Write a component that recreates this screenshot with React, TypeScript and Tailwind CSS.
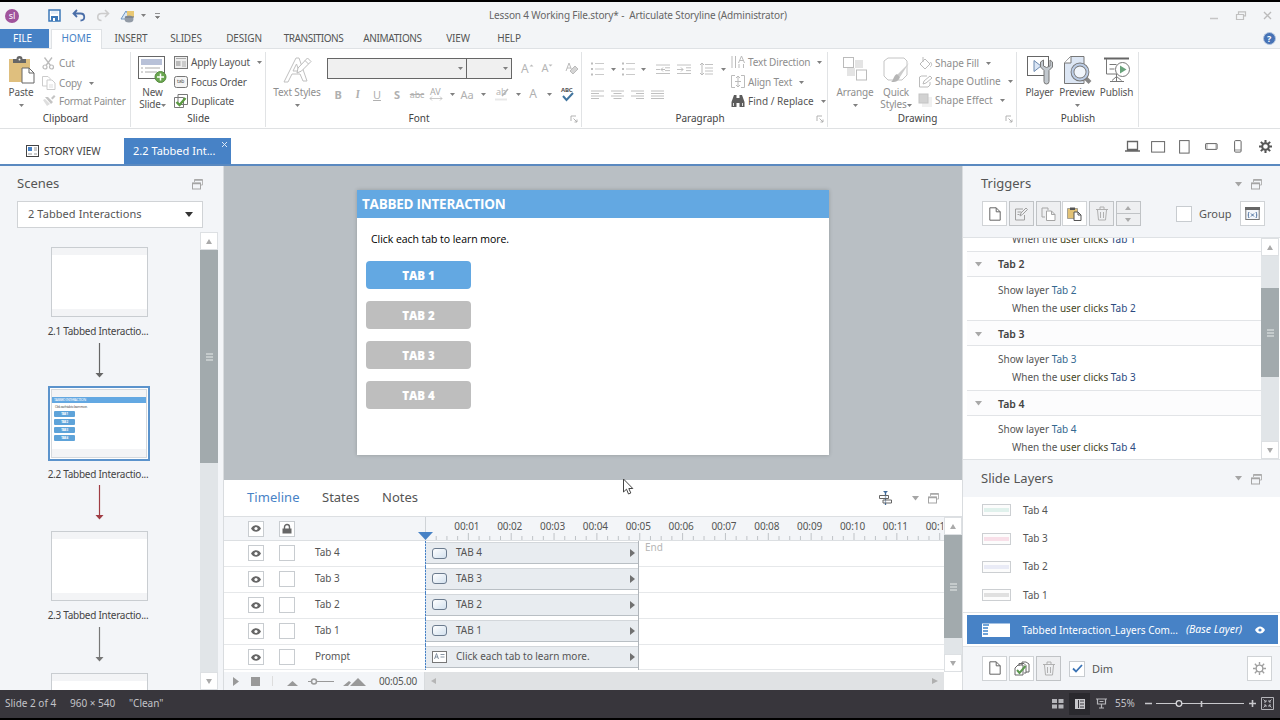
import type { ReactNode } from "react"
import clsx from "clsx"

const tabs = [
    { name: "INSERT", width: "w-[56px]" },
    { name: "SLIDES", width: "w-[54px]" },
    { name: "DESIGN", width: "w-[62px]" },
    { name: "TRANSITIONS", width: "w-[77px]" },
    { name: "ANIMATIONS", width: "w-[81px]" },
    { name: "VIEW", width: "w-[50px]" },
    { name: "HELP", width: "w-[52px]" },
]

const timelineRows = [
    { name: "Tab 4", label: "TAB 4", kind: "shape" },
    { name: "Tab 3", label: "TAB 3", kind: "shape" },
    { name: "Tab 2", label: "TAB 2", kind: "shape" },
    { name: "Tab 1", label: "TAB 1", kind: "shape" },
    { name: "Prompt", label: "Click each tab to learn more.", kind: "text" },
]

const layers = [
    { name: "Tab 4", band: "bg-[#e0f1ec]" },
    { name: "Tab 3", band: "bg-[#f8dfe8]" },
    { name: "Tab 2", band: "bg-[#e9ebf6]" },
    { name: "Tab 1", band: "bg-[#e0e0e0]" },
]

// one second on the timeline ruler, in px
const SECOND = 42.85

function Svg({ w, h, className, children }: { w: number; h: number; className?: string; children: ReactNode }) {
    return (
        <svg width={w} height={h} viewBox={`0 0 ${w} ${h}`} fill="none" className={clsx("shrink-0 overflow-visible", className)}>
            {children}
        </svg>
    )
}

function Caret({ className }: { className?: string }) {
    return (
        <Svg w={5} h={3} className={className}>
            <path d="M0 0h5L2.5 3z" fill="#808080" />
        </Svg>
    )
}

/* ---------- ribbon ---------- */

function Group({ name, width, launcher, children }: { name: string; width: string; launcher?: boolean; children: ReactNode }) {
    return (
        <div className={clsx("relative flex shrink-0 flex-col", width)}>
            <div className="flex h-[61px]">{children}</div>
            <div className={clsx("flex h-[15px] items-center justify-center tracking-normal text-[#444]", launcher && "pr-[10px]")}>{name}</div>
            {launcher && (
                <Svg w={8} h={8} className="absolute bottom-[5px] right-[4px]">
                    <path d="M1 6V1h5M3.5 3.5L7 7M7 4.500V7H4.500" stroke="#aaa" strokeWidth=".9" />
                </Svg>
            )}
            <div className="absolute right-0 top-[2px] h-[75px] w-px bg-[#e1e3e5]" />
        </div>
    )
}

function SmallRow({ icon, text, caret, dim, className }: { icon: ReactNode; text: string; caret?: boolean; dim?: boolean; className?: string }) {
    return (
        <div className={clsx("flex items-center whitespace-nowrap", dim ? "text-[#8e8e8e]" : "text-[#555]", className)}>
            <span className="flex w-[17px] shrink-0">{icon}</span>
            {text}
            {caret && <Caret className="ml-[7px]" />}
        </div>
    )
}

function BigButton({ icon, lines, caret, dim, width }: { icon: ReactNode; lines: string[]; caret?: "below" | "inline"; dim?: boolean; width: string }) {
    return (
        <div className={clsx("flex shrink-0 flex-col items-center pt-[6px]", dim ? "text-[#8e8e8e]" : "text-[#555]", width)}>
            <div className="flex h-[30px] items-start">{icon}</div>
            {lines.map((l, i) => (
                <div key={l} className="flex h-[12px] items-center whitespace-nowrap leading-none">
                    {l}
                    {caret === "inline" && i === lines.length - 1 && <Caret className="mt-[3px]" />}
                </div>
            ))}
            {caret === "below" && <Caret className="mt-[6px]" />}
        </div>
    )
}

function Cell({ w, children }: { w: string; children: ReactNode }) {
    return <span className={clsx("flex shrink-0 items-center justify-center", w)}>{children}</span>
}

function Lines({ kind }: { kind: "left" | "center" | "right" | "full" }) {
    const short = { left: "M0 3.500h8M0 8.500h8", center: "M2.500 3.500h8M2.500 8.500h8", right: "M5 3.500h8M5 8.500h8", full: "M0 3.500h13M0 8.500h13" }[kind]
    return (
        <Svg w={13} h={11}>
            <path d={`M0 1h13M0 6h13${short}`} stroke="#c0c0c0" strokeWidth="1" />
        </Svg>
    )
}

function ListIcon() {
    return (
        <Svg w={13} h={14}>
            <path d="M4 1.500h9M4 7h9M4 12.500h9" stroke="#cacaca" />
            <path d="M0 1.500h2M0 7h2M0 12.500h2" stroke="#bdbdbd" strokeWidth="2" />
        </Svg>
    )
}

function Ribbon() {
    return (
        <div className="flex h-[80px] shrink-0 border-b border-[#dfe1e3] bg-white pt-px tracking-[-0.15px]">
            <Group name="Clipboard" width="w-[131px]">
                <BigButton
                    width="w-[42px]"
                    caret="below"
                    lines={["Paste"]}
                    icon={
                        <Svg w={27} h={29}>
                            <rect x="1" y="3" width="21" height="23" fill="#dfbf7e" />
                            <path d="M5 3h3.500a3 3 0 0 1 6 0H18v4H5z" fill="#666" />
                            <circle cx="11.500" cy="3.500" r="1" fill="#fff" />
                            <path d="M14 12h7l5 5v10H14z" fill="#fff" stroke="#666" />
                            <path d="M21 12v5h5" stroke="#666" />
                        </Svg>
                    }
                />
                <div className="flex flex-col">
                    <SmallRow
                        dim
                        className="mt-[4px] h-[18px]"
                        text="Cut"
                        icon={
                            <Svg w={13} h={13}>
                                <path d="M2.500 0.500l6 8M10 0.500l-6 8" stroke="#bbb" strokeWidth="1.300" />
                                <circle cx="3" cy="10" r="2" stroke="#bbb" strokeWidth="1.200" />
                                <circle cx="9.500" cy="10" r="2" stroke="#bbb" strokeWidth="1.200" />
                            </Svg>
                        }
                    />
                    <SmallRow
                        dim
                        caret
                        className="mt-[2px] h-[18px]"
                        text="Copy"
                        icon={
                            <Svg w={14} h={14}>
                                <path d="M.5.500H6l2 2V10H.5z" fill="#fff" stroke="#ccc" />
                                <path d="M5 4h5l3 3v6.500H5z" fill="#fff" stroke="#ccc" />
                                <path d="M7 9h4M7 11h4" stroke="#ddd" />
                            </Svg>
                        }
                    />
                    <SmallRow
                        dim
                        className="h-[18px] tracking-[-0.270px]"
                        text="Format Painter"
                        icon={
                            <Svg w={14} h={12}>
                                <path d="M3 2l6 7 2-2-5-5z M9 3l3-3 1.500 1.500-3 3z" fill="#c4c4c4" />
                                <path d="M1 5l4 6 3-2-5-5z" fill="#dedede" />
                            </Svg>
                        }
                    />
                </div>
            </Group>

            <Group name="Slide" width="w-[135px]">
                <BigButton
                    width="w-[43px]"
                    caret="inline"
                    lines={["New", "Slide"]}
                    icon={
                        <Svg w={29} h={29}>
                            <rect x=".5" y=".5" width="26" height="22" fill="#fff" stroke="#666" />
                            <rect x="3" y="3" width="21" height="6" fill="#b8c1d8" />
                            <path d="M3 12h2M7 12h15M3 16h2M7 16h12" stroke="#aaa" />
                            <circle cx="22.500" cy="21" r="5.500" fill="#6aa650" stroke="#578c40" />
                            <path d="M22.500 17.500v7M19 21h7" stroke="#fff" strokeWidth="1.500" />
                        </Svg>
                    }
                />
                <div className="flex flex-col">
                    <SmallRow
                        caret
                        className="mt-[3px] h-[18px]"
                        text="Apply Layout"
                        icon={
                            <Svg w={15} h={13}>
                                <rect x=".5" y=".5" width="13" height="12" fill="#eee" stroke="#777" />
                                <path d="M2 2.500h10M8 6h4M8 8h4M8 10h4" stroke="#aaa" />
                                <path d="M2 5h4.500v5H2z" fill="#bbb" />
                            </Svg>
                        }
                    />
                    <SmallRow
                        className="mt-[2px] h-[18px]"
                        text="Focus Order"
                        icon={
                            <Svg w={15} h={12}>
                                <rect x=".5" y=".5" width="13" height="11" rx="2" fill="#f4f4f4" stroke="#777" />
                                <text x="3" y="7" fontSize="5" fill="#555">tab</text>
                            </Svg>
                        }
                    />
                    <SmallRow
                        className="mt-[1px] h-[18px]"
                        text="Duplicate"
                        icon={
                            <Svg w={15} h={14}>
                                <path d="M4 .5h9.500v10H4zM.5 3.500h9v10H.5z" fill="#fff" stroke="#777" />
                                <path d="M2.500 8l3 3 6-7" stroke="#5b9a42" strokeWidth="2.400" />
                            </Svg>
                        }
                    />
                </div>
            </Group>

            <Group name="Font" width="w-[316px]" launcher>
                <BigButton
                    width="w-[62px]"
                    dim
                    caret="below"
                    lines={["Text Styles"]}
                    icon={
                        <Svg w={29} h={29}>
                            <path d="M1 26L13 2l3 0 8 23h-4l-3-7H9l-4 8zM10 15h6l-2.500-7z" stroke="#c0c0c0" />
                            <path d="M14 17l1-5L24.500 2l3.500 3.500L18.500 15z" fill="#fff" stroke="#bbb" />
                            <path d="M22 4.500l3.500 3.500" stroke="#bbb" />
                        </Svg>
                    }
                />
                <div className="flex flex-col">
                    <div className="mt-[8px] flex h-[21px] items-center">
                        <div className="ml-[-1px] flex h-[21px] w-[140px] items-center justify-end border border-[#666] bg-[#f0f0f0] pr-[3px]">
                            <Caret />
                        </div>
                        <div className="ml-[-1px] flex h-[21px] w-[46px] items-center justify-end border border-[#666] bg-[#f0f0f0] pr-[3px]">
                            <Caret />
                        </div>
                        <span className="ml-[9px] text-[12px] text-[#b5b5b5]">A</span>
                        <Svg w={5} h={12}><path d="M.5 3.500L2.500 1.500l2 2z" fill="#bbb" /></Svg>
                        <span className="ml-[8px] text-[11px] text-[#b5b5b5]">A</span>
                        <Svg w={5} h={12}><path d="M.5 1.500l2 2 2-2z" fill="#bbb" /></Svg>
                        <Svg w={14} h={14} className="ml-[12px]">
                            <path d="M1 9l3-8 3 8M2 6h4" stroke="#bbb" />
                            <path d="M5 9l5-5 3 3-5 5z" fill="#d5d5d5" stroke="#bbb" />
                        </Svg>
                    </div>
                    <div className="mt-[6px] flex h-[18px] items-center text-[11px] leading-none text-[#b0b0b0]">
                        <Cell w="w-5"><b>B</b></Cell>
                        <Cell w="w-[19px]"><i className="font-serif font-bold">I</i></Cell>
                        <Cell w="w-5"><u>U</u></Cell>
                        <Cell w="w-5"><span className="font-bold">S</span></Cell>
                        <Cell w="w-5"><s className="text-[9px]">abc</s></Cell>
                        <Cell w="w-[18px]">
                            <Svg w={14} h={14}>
                                <text x="1" y="8" fontSize="9" fill="#aaa">AV</text>
                                <path d="M1 11.500h12M3 9.500l-2 2 2 2M11 9.500l2 2-2 2" stroke="#bbb" strokeWidth=".8" />
                            </Svg>
                        </Cell>
                        <Cell w="w-[14px]"><Caret /></Cell>
                        <Cell w="w-4">Aa</Cell>
                        <Cell w="w-4"><Caret /></Cell>
                        <Cell w="w-[22px]">
                            <Svg w={15} h={14}>
                                <text x="1" y="8" fontSize="9" fill="#b5b5b5">ab</text>
                                <path d="M7 9l6-7" stroke="#b5b5b5" strokeWidth="1.500" />
                                <path d="M0 12.500h12" stroke="#e8e8e8" strokeWidth="2" />
                            </Svg>
                        </Cell>
                        <Cell w="w-[10px]"><Caret /></Cell>
                        <Cell w="w-5"><span className="text-[12px]">A</span></Cell>
                        <Cell w="w-3"><Caret /></Cell>
                        <Cell w="w-[26px]">
                            <Svg w={14} h={16}>
                                <text x="0" y="5.800" fontSize="6" fontWeight="700" fill="#555">ABC</text>
                                <path d="M2 10l3.500 4L12 7" stroke="#41759f" strokeWidth="2" />
                            </Svg>
                        </Cell>
                    </div>
                </div>
            </Group>

            <Group name="Paragraph" width="w-[246px]" launcher>
                <div className="flex w-[149px] shrink-0 flex-col pl-[9px]">
                    <div className="mt-[11px] flex h-4 items-center">
                        <ListIcon />
                        <Caret className="ml-[7px] mr-[6px]" />
                        <ListIcon />
                        <Caret className="ml-[6px]" />
                        <Svg w={14} h={11} className="ml-[10px]">
                            <path d="M0 1h14M0 9.500h14M0 5.500h4M9 3.800h5M9 6.600h5" stroke="#c2c2c2" />
                            <path d="M5 5.500h4M7 3.500l-2 2 2 2" stroke="#bbb" />
                        </Svg>
                        <Svg w={14} h={11} className="ml-[7px]">
                            <path d="M0 1h14M0 9.500h14M0 5.500h6M9 3.800h5M9 6.600h5" stroke="#c2c2c2" />
                            <path d="M4 3.500l2 2-2 2" stroke="#bbb" />
                        </Svg>
                        <Svg w={13} h={14} className="ml-[9px]">
                            <path d="M5 2.500h8M5 6h8M5 9h8M5 12h8" stroke="#c2c2c2" />
                            <path d="M2 1v12M0 3l2-2 2 2M0 11l2 2 2-2" stroke="#bbb" />
                        </Svg>
                        <Caret className="ml-[8px]" />
                    </div>
                    <div className="mt-[10px] flex h-4 items-center gap-[7px]">
                        <Lines kind="left" />
                        <Lines kind="center" />
                        <Lines kind="right" />
                        <Lines kind="full" />
                    </div>
                </div>
                <div className="flex flex-col">
                    <SmallRow
                        dim
                        caret
                        className="mt-[3px] h-[18px]"
                        text="Text Direction"
                        icon={
                            <Svg w={14} h={14}>
                                <path d="M1 1v12M4.500 1v12M8 9v4M12.500 9v4" stroke="#bbb" />
                                <path d="M7.500 8l3-7 3 7M8.500 5.500h4" stroke="#bbb" />
                            </Svg>
                        }
                    />
                    <SmallRow
                        dim
                        caret
                        className="mt-[2px] h-[18px]"
                        text="Align Text"
                        icon={
                            <Svg w={14} h={14}>
                                <path d="M4 .5H.5v12H4M10 .5h3.500v12H10" stroke="#bbb" />
                                <path d="M4 6.500h6M7 1v11M5 3l2-2 2 2M5 10l2 2 2-2" stroke="#bbb" />
                            </Svg>
                        }
                    />
                    <SmallRow
                        caret
                        className="mt-[1px] h-[18px] tracking-normal"
                        text="Find / Replace"
                        icon={
                            <Svg w={14} h={12}>
                                <path d="M3 0h2.500v3h3V0H11l2.500 7v5H8.500V8h-3v4H.5V7z" fill="#5c5c5c" />
                                <path d="M2.500 8v3M11.500 8v3" stroke="#ddd" />
                            </Svg>
                        }
                    />
                </div>
            </Group>

            <Group name="Drawing" width="w-[189px]" launcher>
                <BigButton
                    width="w-[54px]"
                    dim
                    caret="below"
                    lines={["Arrange"]}
                    icon={
                        <Svg w={26} h={26}>
                            <rect x="13" y="4" width="8" height="8" fill="#e4e4e4" />
                            <rect x="5" y="12" width="8" height="8" fill="#e4e4e4" />
                            <rect x="1.500" y="1.500" width="10" height="10" fill="#fff" stroke="#bbb" />
                            <rect x="14.500" y="14" width="10" height="10" fill="#fff" stroke="#bbb" />
                        </Svg>
                    }
                />
                <BigButton
                    width="w-[28px]"
                    dim
                    caret="inline"
                    lines={["Quick", "Styles"]}
                    icon={
                        <Svg w={28} h={28}>
                            <path d="M6 2h16l3 3v14l-5 5H6l-4-4V5z" fill="#fff" stroke="#c4c4c4" />
                            <path d="M27 7l-9 14-3-2z" fill="#ccc" />
                            <path d="M15 18l3 3c-2 5-5 5-9 5 3-2 2-6 6-8z" fill="#b5b5b5" />
                        </Svg>
                    }
                />
                <div className="ml-[8px] flex flex-col tracking-[-0.05px]">
                    <SmallRow
                        dim
                        caret
                        className="mt-[4px] h-[18px]"
                        text="Shape Fill"
                        icon={
                            <Svg w={15} h={13}>
                                <path d="M2 7l5-5 5 5-5 5zM5 0v5" stroke="#bbb" />
                                <path d="M12.500 5c2 3 1 4-.5 5" stroke="#bbb" />
                            </Svg>
                        }
                    />
                    <SmallRow
                        dim
                        caret
                        className="h-[18px]"
                        text="Shape Outline"
                        icon={
                            <Svg w={15} h={13}>
                                <path d="M12 7v3l-2 2H1.500V2l2-1H9" stroke="#bbb" />
                                <path d="M5 9l1-3 6-5 2 2-6 5z" fill="#fff" stroke="#bbb" />
                            </Svg>
                        }
                    />
                    <SmallRow
                        dim
                        caret
                        className="mt-[1px] h-[18px]"
                        text="Shape Effect"
                        icon={
                            <Svg w={15} h={14}>
                                <rect x="4" y="4" width="10" height="10" fill="#f0f0f0" />
                                <rect x="1" y="1" width="9" height="9" fill="#d2d2d2" stroke="#c4c4c4" />
                            </Svg>
                        }
                    />
                </div>
            </Group>

            <Group name="Publish" width="w-[122px]">
                <div className="w-[4px]" />
                <BigButton
                    width="w-[37px]"
                    lines={["Player"]}
                    icon={
                        <Svg w={28} h={29}>
                            <rect x="1.500" y=".5" width="21" height="19" fill="#fff" stroke="#666" />
                            <path d="M8 4.500l7 5.500-7 5.500z" fill="#dbe6f5" stroke="#6a88ad" />
                            <path d="M14.500 6v5l3.500 3.500v11a2.500 2.500 0 0 0 5 0v-11l3.500-3.500V6L24 4v6l-3.500 1.500L17.500 10V4z" fill="#c2c8ce" stroke="#777" />
                        </Svg>
                    }
                />
                <BigButton
                    width="w-[38px]"
                    caret="below"
                    lines={["Preview"]}
                    icon={
                        <Svg w={29} h={29}>
                            <path d="M1.500 7l6-6.500H21v27H1.500z" fill="#dce6f4" stroke="#777" />
                            <path d="M1.500 7H8V.5" fill="#fff" stroke="#777" />
                            <path d="M21.500 21l5.500 5.500" stroke="#888" strokeWidth="4" />
                            <circle cx="17" cy="16" r="7.500" fill="#f1f6fc" stroke="#777" strokeWidth="3.800" />
                            <circle cx="17" cy="16" r="7.500" stroke="#bccde6" strokeWidth="2" />
                        </Svg>
                    }
                />
                <BigButton
                    width="w-[41px]"
                    lines={["Publish"]}
                    icon={
                        <Svg w={26} h={29}>
                            <path d="M0 2.500h25" stroke="#666" strokeWidth="2" />
                            <path d="M2.500 3v15H13M12.500 18v7M6 25.500h14M8 24.500l4.500-4 5 4M5.500 8.500h7M5.500 13h5" stroke="#777" />
                            <circle cx="18.500" cy="13.500" r="7" fill="#fff" stroke="#777" />
                            <path d="M16 9.500l6.500 4-6.500 4z" fill="#6aa37c" />
                        </Svg>
                    }
                />
            </Group>
        </div>
    )
}

function TitleBar() {
    return (
        <div className="flex h-[27px] shrink-0 items-center bg-[#f3f5f7] text-[#666]">
            <div className="ml-[5px] flex h-[14px] w-[14px] items-center justify-center rounded-full bg-[#a0549c] text-[9px] leading-none text-white">sl</div>
            <Svg w={13} h={13} className="ml-[29px]">
                <path d="M1 1h11v11H1z" fill="#fff" stroke="#3c78b8" strokeWidth="1.500" />
                <path d="M3 7h7v5H3z" fill="#3c78b8" />
                <path d="M5 9h2v3H5z" fill="#fff" />
                <path d="M3 2h7v3H3z" fill="#e6eef8" />
            </Svg>
            <Svg w={14} h={13} className="ml-[11px]">
                <path d="M5 1L1.500 4.500 5 8M2 4.500h6.500c5 0 5 7 0 7" stroke="#4a6ea8" strokeWidth="1.800" />
            </Svg>
            <Svg w={14} h={13} className="ml-[10px]">
                <path d="M9 1l3.500 3.500L9 8M12 4.500H5.500c-5 0-5 7 0 7" stroke="#ccc" strokeWidth="1.600" />
            </Svg>
            <Svg w={16} h={14} className="ml-[10px]">
                <path d="M1 10l5-8 5 8z" fill="#d9e7f5" stroke="#6f97c3" />
                <rect x="7" y="2" width="7" height="6" fill="#e9c873" />
                <ellipse cx="9" cy="10" rx="4.500" ry="3.500" fill="#929ba6" />
                <path d="M5 8h9" stroke="#6b737d" />
            </Svg>
            <Caret className="ml-[5px]" />
            <Svg w={7} h={6} className="ml-[8px]"><path d="M1 .5h5M1.500 3.500h4L3.500 5.500z" stroke="#777" fill="#777" strokeWidth=".8" /></Svg>
            <div className="ml-[328px] w-[300px] whitespace-pre text-[10px] tracking-[-0.140px]">Lesson 4 Working File.story* -  Articulate Storyline (Administrator)</div>
            <div className="ml-auto mr-[8px] flex items-center">
                <Svg w={8} h={9} className="mr-[18px]"><path d="M0 7.500h8" stroke="#c5c5c5" strokeWidth="1.500" /></Svg>
                <Svg w={10} h={9} className="mr-[17px]"><path d="M2.500 3V.8h7v4H8M.5 3.500h7v5h-7z" stroke="#c0c0c0" strokeWidth="1.200" /></Svg>
                <Svg w={9} h={9}><path d="M1 1l7 7M8 1L1 8" stroke="#bbb" strokeWidth="1.400" /></Svg>
            </div>
        </div>
    )
}

function MenuTabs() {
    return (
        <div className="flex h-5 shrink-0 border-b border-[#dfe2e5] bg-[#f3f5f7] text-[10px] tracking-[-0.15px] text-[#555]">
            <div className="flex w-[49px] items-center justify-center bg-[#4782c6] pr-1 text-white">FILE</div>
            <div className="-mb-px ml-[2px] flex w-[51px] items-center justify-center border-x border-t border-[#dfe2e5] bg-white pb-[2px] tracking-normal text-[#4782c6]">HOME</div>
            <div className="flex pl-[1px]">
                {tabs.map((t) => (
                    <div
                        key={t.name}
                        className={clsx("flex items-center justify-center", t.width, t.name === "TRANSITIONS" && "tracking-[-0.45px]", t.name === "ANIMATIONS" && "tracking-[-0.35px]")}
                    >
                        {t.name}
                    </div>
                ))}
            </div>
            <Svg w={13} h={13} className="ml-auto mr-[4px] mt-[3px]">
                <circle cx="6.500" cy="6.500" r="6" fill="#4672b5" stroke="#b4c6e0" />
                <text x="4" y="10" fontSize="9" fontWeight="700" fill="#fff">?</text>
            </Svg>
        </div>
    )
}

function Gear({ bold, className }: { bold?: boolean; className?: string }) {
    return (
        <svg width={13} height={13} viewBox="0 0 14 14" fill="none" stroke="currentColor" strokeWidth={bold ? 2.2 : 1.5} className={className}>
            <circle cx="7" cy="7" r="3.600" />
            <path d="M7 0v3M7 11v3M0 7h3M11 7h3M2 2l2.200 2.200M9.800 9.800L12 12M12 2L9.800 4.200M4.200 9.800L2 12" />
        </svg>
    )
}

function DocumentTabs() {
    return (
        <div className="flex h-[37px] shrink-0 items-end border-b-2 border-[#5a89c0] bg-white">
            <div className="flex h-[26px] w-[124px] items-center pl-[26px] text-[10px] tracking-[-0.1px] text-[#444]">
                <Svg w={13} h={12} className="mr-[5px]">
                    <rect x=".5" y=".5" width="12" height="11" fill="#fff" stroke="#444" />
                    <rect x="2" y="2" width="4" height="4" fill="#4782c6" />
                    <path d="M8 3h3M8 5h3M2 9h4M8 9h3" stroke="#bbb" strokeWidth="1.500" />
                </Svg>
                STORY VIEW
            </div>
            <div className="relative flex h-[26px] w-[107px] items-center bg-[#4782c6] pl-[9px] text-[11px] text-white">
                2.2 Tabbed Int...
                <Svg w={7} h={7} className="absolute right-[3px] top-[3px]"><path d="M1 1l5 5M6 1L1 6" stroke="#dce8f6" /></Svg>
            </div>
            <div className="ml-auto mr-[8px] flex h-[35px] items-center text-[#666]">
                <Svg w={15} h={11} className="mr-[11px]"><path d="M2.500.5h10v8h-10zM0 10h15" stroke="currentColor" strokeWidth="1.300" /></Svg>
                <Svg w={15} h={12} className="mr-[13px]"><rect x=".6" y=".6" width="13" height="10.500" stroke="currentColor" /></Svg>
                <Svg w={11} h={14} className="mr-[15px]"><rect x=".6" y=".6" width="9.500" height="12.500" stroke="currentColor" /></Svg>
                <Svg w={13} h={7} className="mr-[16px]"><rect x=".6" y=".6" width="11.500" height="5.800" rx=".5" stroke="currentColor" /><path d="M2 1v5M11 1v5" stroke="currentColor" strokeWidth=".6" /></Svg>
                <Svg w={8} h={13} className="mr-[17px]"><rect x=".6" y=".6" width="6.500" height="11.500" rx="1" stroke="currentColor" /><path d="M1 10h6" stroke="currentColor" strokeWidth=".7" /></Svg>
                <Gear bold className="text-[#555]" />
            </div>
        </div>
    )
}

/* ---------- shared panel parts ---------- */

function Undock() {
    return (
        <Svg w={11} h={12}>
            <path d="M2.500 4V1.500h8V7H9" stroke="#b5b5b5" />
            <path d="M2.500 2h8M.5 5.500h8" stroke="#a5a5a5" strokeWidth="1.600" />
            <rect x=".5" y="5" width="8" height="6" stroke="#a5a5a5" />
        </Svg>
    )
}

function PanelHeader({ title, height }: { title: string; height: string }) {
    return (
        <div className={clsx("flex shrink-0 items-center pl-[18px] pr-[18px] text-[13px] text-[#555]", height)}>
            {title}
            <Svg w={7} h={5} className="ml-auto mr-[9px]"><path d="M0 0h7L3.500 4.500z" fill="#a5a5a5" /></Svg>
            <Undock />
        </div>
    )
}

function VScroll({ before, thumb }: { before?: string; thumb: string }) {
    return (
        <div className="flex w-[18px] shrink-0 flex-col bg-[#e1e5e8]">
            <div className="flex h-[18px] shrink-0 items-center justify-center border border-[#dde0e3] bg-white">
                <Svg w={6} h={5}><path d="M0 5l3-5 3 5z" fill="#aaa" /></Svg>
            </div>
            {before && <div className={before} />}
            <div className={clsx("flex items-center justify-center bg-[#a2aaad]", thumb)}>
                <Svg w={7} h={8}><path d="M0 1h7M0 4h7M0 7h7" stroke="#e8ebec" strokeWidth="1.200" /></Svg>
            </div>
            <div className="mt-auto flex h-[18px] shrink-0 items-center justify-center border border-[#dde0e3] bg-white">
                <Svg w={6} h={5}><path d="M0 0l3 5 3-5z" fill="#aaa" /></Svg>
            </div>
        </div>
    )
}

/* ---------- scenes ---------- */

function Thumb() {
    return (
        <div className="flex h-[70px] w-[97px] shrink-0 border border-[#c9cdd1] bg-[#f3f4f6] py-[7px]">
            <div className="w-full bg-white" />
        </div>
    )
}

function SelectedThumb() {
    return (
        <div className="h-[75px] w-[102px] shrink-0 border-2 border-[#5b93cc] bg-white p-px">
            <div className="flex h-full flex-col border border-[#d5d9dd] bg-white">
                <div className="h-[7px] shrink-0 bg-[#f3f4f6]" />
                <div className="flex h-[6px] shrink-0 items-center bg-[#63a8e2] pl-[2px] text-[3.500px] leading-none text-white">TABBED INTERACTION</div>
                <div className="mt-[2px] pl-[3px] text-[3px] leading-[4px] text-[#444]">Click each tab to learn more.</div>
                <div className="mt-[2px] flex flex-col gap-[2px] pl-[2px]">
                    {["TAB 1", "TAB 2", "TAB 3", "TAB 4"].map((t) => (
                        <div key={t} className="flex h-[6px] w-[21px] items-center justify-center rounded-[1px] bg-[#5ea3d9] text-[3px] font-bold leading-none text-white">{t}</div>
                    ))}
                </div>
                <div className="mt-auto h-[8px] bg-[#f3f4f6]" />
            </div>
        </div>
    )
}

function Connector({ className }: { className: string }) {
    return (
        <Svg w={9} h={35} className={className}>
            <path d="M4.500 0v31" stroke="currentColor" strokeWidth="1.200" />
            <path d="M.5 30h8l-4 4.500z" fill="currentColor" />
        </Svg>
    )
}

function Scenes() {
    return (
        <div className="flex w-[224px] shrink-0 flex-col border-r border-[#d9dcdf] bg-[#f3f5f8]">
            <div className="flex h-[35px] shrink-0 items-center justify-between pl-[17px] pr-[20px] text-[13px] text-[#555]">
                Scenes
                <Undock />
            </div>
            <div className="ml-[17px] flex h-[27px] w-[186px] shrink-0 items-center justify-between border border-[#d0d3d6] bg-white pl-[10px] pr-[9px] text-[11px] tracking-[0.08px] text-[#555]">
                2 Tabbed Interactions
                <Svg w={8} h={5}><path d="M0 0h8L4 5z" fill="#333" /></Svg>
            </div>
            <div className="mt-[4px] flex min-h-0 flex-1">
                <div className="flex w-[200px] flex-col items-center overflow-hidden pt-[15px] pr-[2px] text-[10px] leading-none tracking-[-0.270px] text-[#444]">
                    <Thumb />
                    <div className="mt-[9px] h-[10px] pr-[2px]">2.1 Tabbed Interactio...</div>
                    <Connector className="mt-[7px] text-[#666]" />
                    <div className="h-[8px] shrink-0" />
                    <SelectedThumb />
                    <div className="mt-[8px] h-[10px] pr-[2px]">2.2 Tabbed Interactio...</div>
                    <Connector className="mt-[6px] text-[#a03c44]" />
                    <div className="h-[11px] shrink-0" />
                    <Thumb />
                    <div className="mt-[9px] h-[10px] pr-[2px]">2.3 Tabbed Interactio...</div>
                    <Connector className="mt-[7px] text-[#777]" />
                    <div className="h-[11px] shrink-0" />
                    <Thumb />
                </div>
                <VScroll thumb="h-[213px]" />
            </div>
        </div>
    )
}

/* ---------- stage ---------- */

function Stage() {
    return (
        <div className="h-[314px] shrink-0 bg-[#b9bfc4] pl-[133px] pt-[24px] font-['Open_Sans',sans-serif]">
            <div className="flex h-[265px] w-[472px] flex-col bg-white shadow-[0_0_4px_rgba(0,0,0,0.2)]">
                <div className="flex h-[28px] shrink-0 items-center bg-[#63a8e2] pl-[5px] text-[13.500px] font-bold tracking-[-0.250px] text-white">TABBED INTERACTION</div>
                <div className="mt-[11px] h-[20px] pl-[14px] text-[10.500px] leading-[20px] tracking-[-0.050px] text-black">Click each tab to learn more.</div>
                <div className="mt-[12px] flex flex-col gap-[12px] pl-[9px]">
                    {["TAB 1", "TAB 2", "TAB 3", "TAB 4"].map((t, i) => (
                        <div key={t} className={clsx("flex h-[28px] w-[105px] items-center justify-center rounded-[4px] pt-[2px] text-[11.500px] leading-none font-extrabold text-white", i === 0 ? "bg-[#63a8e2]" : "bg-[#bebebe]")}>
                            {t}
                        </div>
                    ))}
                </div>
            </div>
        </div>
    )
}

/* ---------- timeline ---------- */

function Eye() {
    return (
        <Svg w={10} h={7}>
            <path d="M0 3.500C2.500-.8 7.500-.8 10 3.500 7.500 7.800 2.500 7.800 0 3.500z" fill="#666" />
            <circle cx="5" cy="3.500" r="1.600" fill="#fff" />
        </Svg>
    )
}

function Box({ children }: { children?: ReactNode }) {
    return <div className="flex h-[16px] w-[16px] shrink-0 items-center justify-center border border-[#c8ccd0] bg-white">{children}</div>
}

function Ruler() {
    return (
        <svg width={518} height={23} className="block">
            {Array.from({ length: 48 }).map((_, i) => {
                const x = 0.5 + (i + 1) * (SECOND / 4)
                const major = (i + 1) % 4 === 0
                return <path key={i} d={`M${x} ${major ? 16 : 19}V23`} stroke="#bfc3c7" strokeWidth="1" />
            })}
            {Array.from({ length: 12 }).map((_, i) => (
                <text key={i} x={(i + 1) * SECOND - 1} y="13" fontSize="10" textAnchor="middle" fill="#555" letterSpacing="-.1">
                    {`00:${String(i + 1).padStart(2, "0")}`}
                </text>
            ))}
        </svg>
    )
}

function Timeline() {
    return (
        <div className="flex min-h-0 flex-1 flex-col bg-white text-[#555]">
            <div className="flex h-[36px] shrink-0 items-center pl-[23px] pr-[23px] text-[13px]">
                <span className="w-[75px] tracking-[0.05px] text-[#4782c6]">Timeline</span>
                <span className="w-[60px]">States</span>
                <span>Notes</span>
                <Svg w={13} h={14} className="ml-auto mr-[20px]">
                    <path d="M6.500 0v14" stroke="#3f6b9c" strokeWidth="1.300" />
                    <path d="M4 0h5L6.500 2.500z" fill="#3f6b9c" />
                    <path d="M.5 4.500h9v3h-9zM4 9h8.500v3H4z" fill="#fff" fillOpacity=".5" stroke="#666" />
                </Svg>
                <Svg w={7} h={5} className="mr-[9px]"><path d="M0 0h7L3.500 4.500z" fill="#a5a5a5" /></Svg>
                <Undock />
            </div>
            <div className="flex h-[156px] shrink-0 border-t border-[#dcdfe2]">
                <div className="flex min-w-0 flex-1 flex-col overflow-hidden">
                    <div className="flex h-[24px] shrink-0 border-b border-[#dcdfe2] bg-[#f3f5f8]">
                        <div className="flex w-[202px] shrink-0 items-center border-r border-[#cfd3d7] pl-[24px]">
                            <Box><Eye /></Box>
                            <div className="ml-[15px]">
                                <Box>
                                    <Svg w={10} h={10}>
                                        <path d="M2.500 5V3a2.500 2.500 0 0 1 5 0v2" stroke="#666" strokeWidth="1.400" />
                                        <rect x=".5" y="4.500" width="9" height="5" fill="#666" />
                                    </Svg>
                                </Box>
                            </div>
                        </div>
                        <div className="relative -ml-px">
                            <Ruler />
                            <Svg w={15} h={8} className="absolute -left-[7px] top-[15px]"><path d="M0 0h15L7.500 8z" fill="#4782c6" /></Svg>
                        </div>
                    </div>
                    {timelineRows.map((r) => (
                        <div key={r.name} className="flex h-[25.900px] shrink-0 border-b border-[#e6e8ea]">
                            <div className="flex w-[201px] shrink-0 items-center pl-[24px] text-[10px]">
                                <Box><Eye /></Box>
                                <div className="ml-[15px]"><Box /></div>
                                <span className="ml-[20px] pb-px">{r.name}</span>
                            </div>
                            {/* playhead */}
                            <div className="-mb-px w-px shrink-0 bg-[repeating-linear-gradient(to_bottom,#4782c6_0_2px,#c4d6ec_2px_3px)]" />
                            <div className="-mb-px w-[213px] shrink-0 border-r border-[#b0b5ba] bg-white pt-px">
                                <div className="flex h-[22px] items-center border-y border-t-[#d3d7db] border-b-[#b9bfc4] bg-[#e8ecf0] pl-[6px] pr-[3px] text-[10px]">
                                    {r.kind === "shape" ? (
                                        <div className="h-[11px] w-[15px] rounded-[3px] border border-[#6b7b8e] bg-gradient-to-br from-white to-[#d3e1ee]" />
                                    ) : (
                                        <Svg w={15} h={12}>
                                            <rect x=".5" y=".5" width="14" height="11" fill="#fff" stroke="#777" />
                                            <path d="M2.500 8l2-5.500 2 5.500M3 6h3M8.500 3.500h4M8.500 6h4" stroke="#6b7b8e" strokeWidth=".8" />
                                        </Svg>
                                    )}
                                    <span className="ml-[9px] whitespace-nowrap pb-px">{r.label}</span>
                                    <Svg w={5} h={8} className="ml-auto"><path d="M0 0l5 4-5 4z" fill="#707070" /></Svg>
                                </div>
                            </div>
                            {r.name === "Tab 4" && <span className="pl-[6px] text-[10px] leading-[13px] text-[#b5b5b5]">End</span>}
                        </div>
                    ))}
                </div>
                <VScroll thumb="h-[103px]" />
            </div>
            <div className="flex flex-1 bg-white">
                <div className="flex w-[201px] shrink-0 items-center border-r border-[#d8dbde] bg-[#f3f5f8] pl-[9px] text-[#999]">
                    <Svg w={6} h={9}><path d="M0 0l6 4.500L0 9z" fill="currentColor" /></Svg>
                    <div className="ml-[12px] h-[9px] w-[9px] bg-[#999]" />
                    <div className="ml-[12px] h-[10px] w-px bg-[#ddd]" />
                    <Svg w={11} h={6} className="ml-[14px] mt-[3px]"><path d="M0 6l5.500-5L11 6z" fill="currentColor" /></Svg>
                    <Svg w={26} h={7} className="ml-[10px]">
                        <path d="M0 3.500h3M9 3.500h17" stroke="currentColor" strokeWidth="1.200" />
                        <circle cx="6" cy="3.500" r="2.500" stroke="currentColor" strokeWidth="1.500" />
                    </Svg>
                    <Svg w={23} h={8} className="ml-[9px] mt-[1px]"><path d="M0 8l6-5 2 1.500L5 8zM7 8l8-8 8 8z" fill="currentColor" /></Svg>
                    <span className="ml-[13px] text-[10px] tracking-[-0.200px] text-[#555]">00:05.00</span>
                </div>
                <div className="flex flex-1 items-center justify-between bg-[#e0e2e4] px-[6px]">
                    <Svg w={5} h={6}><path d="M5 0v6L0 3z" fill="#b5b5b5" /></Svg>
                    <Svg w={6} h={6}><path d="M0 0v6l6-3z" fill="#b0b0b0" /></Svg>
                </div>
                <div className="w-[18px]" />
            </div>
        </div>
    )
}

/* ---------- right column ---------- */

function ToolButton({ off, children }: { off?: boolean; children: ReactNode }) {
    return (
        <div className={clsx("flex h-[25px] w-[25px] shrink-0 items-center justify-center border", off ? "border-[#c0c3c6] bg-[#eeeff1]" : "border-[#d0d3d6] bg-white")}>
            {children}
        </div>
    )
}

function PageIcon() {
    return <Svg w={12} h={14}><path d="M.8.800h6.400l4 4v8.400H.8zM7.200.800v4h4" stroke="#666" /></Svg>
}

function TrashIcon() {
    return (
        <Svg w={14} h={15}>
            <path d="M1 3.500h12M5 3V1h4v2M2.500 4l1 10h7l1-10M5.500 6v6M8.500 6v6" stroke="#b0b0b0" />
        </Svg>
    )
}

function TriggerEvent({ n }: { n: number }) {
    return (
        <div className="whitespace-nowrap">
            When the <span className="text-[#46461c]">user clicks</span> <span className="text-[#2c4a80]">Tab {n}</span>
        </div>
    )
}

function Trigger({ n }: { n: number }) {
    return (
        <>
            <div className="flex h-[26px] shrink-0 items-center border-y border-[#e2e4e7] bg-[#fcfcfd] pl-[8px] pt-[2px] text-[10.500px] font-semibold leading-none text-[#444]">
                <Svg w={7} h={5}><path d="M0 0h7L3.500 4.500z" fill="#a8a8a8" /></Svg>
                <span className="ml-[16px]">Tab {n}</span>
            </div>
            <div className="h-[43.600px] shrink-0 pt-[4px] pl-[31px] text-[10px] leading-[18px] text-[#555]">
                <div>Show layer <span className="text-[#35688f]">Tab {n}</span></div>
                <div className="pl-[14px]"><TriggerEvent n={n} /></div>
            </div>
        </>
    )
}

function RightColumn() {
    return (
        <div className="flex w-[318px] shrink-0 flex-col border-l border-[#d9dcdf] bg-[#f3f5f8]">
            <PanelHeader title="Triggers" height="h-[35px] pt-px" />
            <div className="flex h-[36px] shrink-0 items-start pl-[19px]">
                <div className="flex gap-[1.800px]">
                    <ToolButton><PageIcon /></ToolButton>
                    <ToolButton off>
                        <Svg w={14} h={14}><path d="M9 2H1.500v11h9V8M3.500 5h4M3.500 7.500h2M6 9l1-3 5-5 1.500 1.500-5 5z" stroke="#a0a0a0" /></Svg>
                    </ToolButton>
                    <ToolButton off>
                        <Svg w={15} h={14}><path d="M4 10H1V1h6v2" stroke="#a5a5a5" /><path d="M5.500 4h5l3.500 3.500v6H5.500zM10.500 4v3.500H14" fill="#fff" stroke="#a5a5a5" /></Svg>
                    </ToolButton>
                    <ToolButton>
                        <Svg w={15} h={14}>
                            <path d="M.5 1.500h10v10H.5z" fill="#e2c276" stroke="#777" strokeWidth=".6" />
                            <path d="M3 .5h5v2.500H3z" fill="#555" />
                            <path d="M7 5h4l3 3v5.500H7zM11 5v3h3" fill="#fff" stroke="#555" />
                        </Svg>
                    </ToolButton>
                    <ToolButton off><TrashIcon /></ToolButton>
                    <div className="flex h-[25px] w-[25px] flex-col border border-[#c0c3c6] bg-[#eeeff1]">
                        <div className="flex flex-1 items-center justify-center border-b border-[#c0c3c6]"><Svg w={6} h={4}><path d="M0 4l3-4 3 4z" fill="#aaa" /></Svg></div>
                        <div className="flex flex-1 items-center justify-center"><Svg w={6} h={4}><path d="M0 0l3 4 3-4z" fill="#aaa" /></Svg></div>
                    </div>
                </div>
                <div className="ml-[35px] flex h-[26px] items-center">
                    <Box />
                    <span className="ml-[7px] w-[41px] text-[11px] text-[#555]">Group</span>
                </div>
                <ToolButton>
                    <Svg w={15} h={15}>
                        <rect x=".8" y="1.500" width="13.400" height="12" fill="#f4f7fb" stroke="#777" />
                        <path d="M0 2.500h15" stroke="#666" strokeWidth="3" />
                        <path d="M4 6c-1 2-1 4 0 6M11 6c1 2 1 4 0 6M6 7.500l3 3M9 7.500l-3 3" stroke="#496d9c" />
                    </Svg>
                </ToolButton>
            </div>

            <div className="flex h-[223px] shrink-0 border-y border-[#dfe2e5] bg-white">
                <div className="flex min-w-0 flex-1 flex-col overflow-hidden pl-[4px]">
                    <div className="flex h-[12.600px] shrink-0 items-end pl-[45px] text-[10px] text-[#555]">
                        <div className="mb-[3px] leading-[18px]"><TriggerEvent n={1} /></div>
                    </div>
                    <Trigger n={2} />
                    <Trigger n={3} />
                    <Trigger n={4} />
                </div>
                <VScroll before="h-[32px] shrink-0" thumb="h-[89px]" />
                <div className="w-px bg-white" />
            </div>

            <PanelHeader title="Slide Layers" height="h-[37px]" />
            <div className="flex h-[116px] shrink-0 flex-col border-b border-[#e0e3e6] bg-white">
                {layers.map((l) => (
                    <div key={l.name} className="flex h-[28.400px] items-center pl-[19px] pb-[2px] text-[10px] text-[#555]">
                        <div className="flex h-[12px] w-[29px] flex-col justify-center border border-[#cccfd2] bg-[#fcfcfc]">
                            <div className={clsx("mx-[1px] h-[4px]", l.band)} />
                        </div>
                        <span className="ml-[12px]">{l.name}</span>
                    </div>
                ))}
            </div>
            <div className="flex h-[34px] shrink-0 items-center border-b border-[#e0e3e6] bg-white pl-[4px] pr-[2px]">
                <div className="flex h-[29px] flex-1 items-center bg-[#4782c6] pl-[15px] text-[10px] text-white">
                    <Svg w={28} h={14}>
                        <rect y=".5" width="28" height="13.500" fill="#fff" />
                        <path d="M1 2h6M1 5h5M1 8h5M1 11h5" stroke="#6fa3d8" strokeWidth="2" />
                    </Svg>
                    <span className="ml-[12px] w-[164px] whitespace-nowrap pt-px">Tabbed Interaction_Layers Com...</span>
                    <i className="w-[69px] whitespace-nowrap pt-px text-[10.500px]">(Base Layer)</i>
                    <svg width={10} height={8} viewBox="0 0 10 8">
                        <path d="M0 4C2.500-.8 7.500-.8 10 4 7.500 8.800 2.500 8.800 0 4z" fill="#fff" />
                        <circle cx="5" cy="4" r="1.600" fill="#4782c6" />
                    </svg>
                </div>
            </div>
            <div className="flex flex-1 items-center pl-[19px] pr-[8px] pb-px">
                <div className="flex gap-[2px]">
                    <ToolButton><PageIcon /></ToolButton>
                    <ToolButton>
                        <Svg w={16} h={15}>
                            <path d="M8 4V1h4l3 2v8h-3M5 5V2.500h5l2 2V12h-2M1 7l3-3h5v10H1z" fill="#fff" stroke="#666" />
                            <path d="M3 9l2.500 3 6-7" stroke="#5c9850" strokeWidth="2" />
                        </Svg>
                    </ToolButton>
                    <ToolButton off><TrashIcon /></ToolButton>
                </div>
                <div className="ml-[8px] pt-px">
                    <Box><Svg w={11} h={9}><path d="M1 4.500l3 3L10 1" stroke="#3a73b5" strokeWidth="1.800" /></Svg></Box>
                </div>
                <span className="ml-[7px] pt-[3px] text-[11px] text-[#555]">Dim</span>
                <div className="ml-auto"><ToolButton><Gear className="text-[#a0a0a0]" /></ToolButton></div>
            </div>
        </div>
    )
}

function StatusBar() {
    return (
        <div className="flex h-[28px] shrink-0 items-center bg-[#38363c] pb-px text-[10px] text-[#c3c3c8]">
            <span className="w-[65px] pl-[5px]">Slide 2 of 4</span>
            <span className="w-[60px] pl-[5px]">960 × 540</span>
            <span className="pl-[4px]">"Clean"</span>
            <div className="ml-auto flex h-[20px] items-center">
                <Svg w={12} h={10}><path d="M0 0h5v4H0zM6.500 0h5v4h-5zM0 5.500h5v4H0zM6.500 5.500h5v4h-5z" fill="#b5b5ba" /></Svg>
                <div className="ml-[5px] flex h-[22px] w-[21px] items-center justify-center bg-[#2a292e]">
                    <Svg w={10} h={10}><path d="M0 0h10v10H0z" fill="#c8c8cc" /><path d="M3.500 1v8M5 2h4M5 5h4M5 8h4" stroke="#38363c" /></Svg>
                </div>
                <Svg w={11} h={11} className="ml-[6px]"><path d="M0 1h11M1.500 1v5h8V1M5.500 6v4M3 10h5M3.500 3.500h4" stroke="#b5b5ba" strokeWidth="1.200" /></Svg>
                <span className="ml-[8px] w-[29px]">55%</span>
                <Svg w={114} h={11}>
                    <path d="M1 5.500h7M105 5.500h7M108.500 2v7" stroke="#c8c8cc" strokeWidth="1.600" />
                    <path d="M12 5.500h20M38 5.500h62" stroke="#c8c8cc" />
                    <path d="M57.500 3v6" stroke="#c8c8cc" strokeWidth="1.600" />
                    <circle cx="35" cy="5.500" r="2.800" stroke="#d8d8dc" strokeWidth="1.300" />
                </Svg>
                <Svg w={13} h={13} className="ml-[3px] mr-[6px]">
                    <path d="M.5.500h12v12H.5zM2.500 2.500L5 5M10.500 2.500L8 5M2.500 10.500L5 8M10.500 10.500L8 8M3 5h2V3M8 3v2h2M3 8h2v2M10 8H8v2" stroke="#b5b5ba" />
                </Svg>
            </div>
        </div>
    )
}

export default function App() {
    return (
        <div className="relative flex h-[720px] w-[1280px] flex-col overflow-hidden bg-black py-[2px] font-['Noto_Sans','Liberation_Sans',sans-serif] text-[10px]">
            <TitleBar />
            <MenuTabs />
            <Ribbon />
            <DocumentTabs />
            <div className="flex min-h-0 flex-1">
                <Scenes />
                <div className="flex min-w-0 flex-1 flex-col">
                    <Stage />
                    <Timeline />
                </div>
                <RightColumn />
            </div>
            <StatusBar />
            {/* mouse pointer */}
            <Svg w={12} h={18} className="absolute left-[622px] top-[478px]">
                <path d="M1.500 1v13l3-2.800 2 4.800 2.300-1-2-4.500h4z" fill="#fff" stroke="#444" />
            </Svg>
        </div>
    )
}
